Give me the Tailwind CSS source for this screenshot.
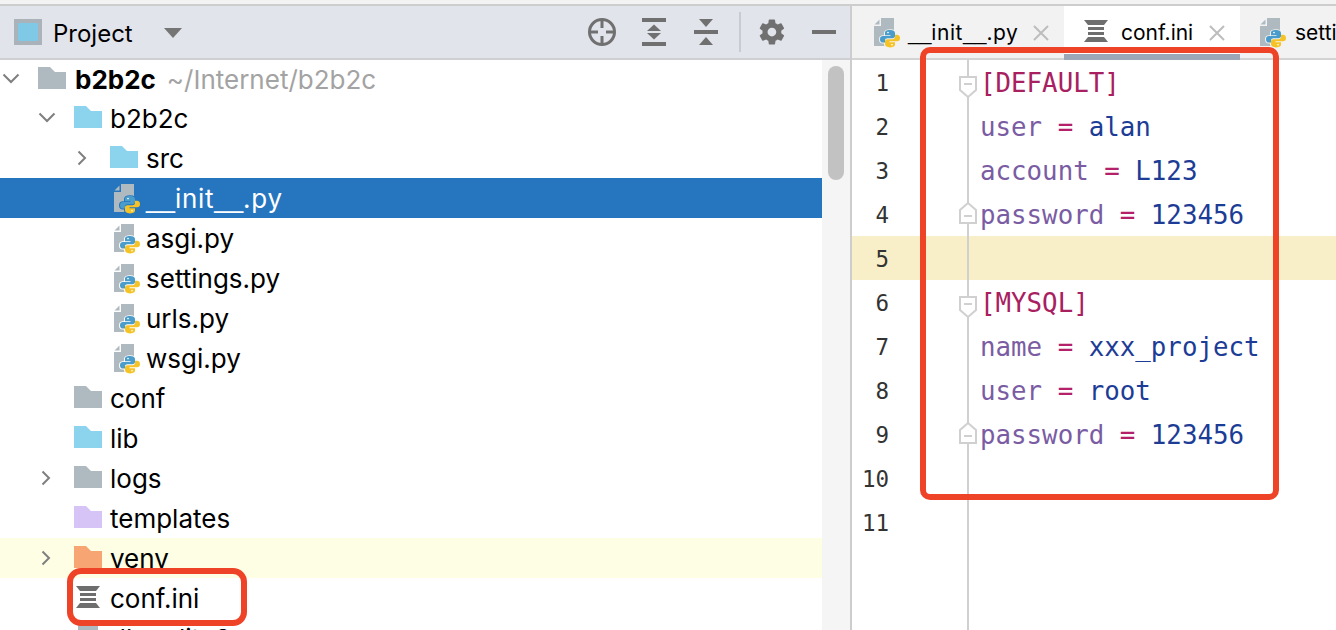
<!DOCTYPE html>
<html lang="en">

<head>
    <meta charset="UTF-8" />
    <meta name="viewport" content="width=device-width, initial-scale=1.0" />
    <title>conf.ini</title>
    <script src="https://cdn.jsdelivr.net/npm/@tailwindcss/browser@4"></script>
</head>

<body class="overflow-hidden bg-white">
    <!-- shared icons -->
    <svg class="hidden">
        <defs>
            <path id="snake" d="M10 0C6 0 5 1.500 5 3.500V6H10.500V7H3C1 7 0 8.500 0 10.500C0 13 1 14.500 3 14.500H5V12C5 10.500 6 9.500 7.500 9.500H12.500C14 9.500 15 8.500 15 7V3.500C15 1.500 13 0 10 0z" />
        </defs>
        <symbol id="folder" viewBox="0 0 28 22"><path d="M0 0H12L17 5H28V22H0z" fill="currentColor" /></symbol>
        <symbol id="open" viewBox="0 0 18 11"><path d="M1.500 1.500L9 9L16.500 1.500" fill="none" stroke="#7f7f7f" stroke-width="2" /></symbol>
        <symbol id="closed" viewBox="0 0 10 16"><path d="M1.500 1.500L8 8L1.500 14.500" fill="none" stroke="#7f7f7f" stroke-width="2" /></symbol>
        <symbol id="ini" viewBox="0 0 24 22" fill="#6e6e6e">
            <path d="M0 0H24L20 5H4z" /><rect x="4" y="7" width="16" height="3" /><rect x="4" y="12" width="16" height="3" /><path d="M4 17H20L24 22H0z" />
        </symbol>
        <symbol id="py" viewBox="0 0 26 30">
            <path d="M7 0H20V28H0V8H7z" fill="#aeb9c0" />
            <path d="M5.500 1.500V6.500H0.500z" fill="#aeb9c0" />
            <g transform="translate(6 12) scale(1 .87)">
                <g fill="currentColor" stroke="currentColor" stroke-width="2">
                    <use href="#snake" /><use href="#snake" transform="rotate(180 10 10)" />
                </g>
                <use href="#snake" fill="#4a9ccb" />
                <use href="#snake" fill="#f6c327" transform="rotate(180 10 10)" />
                <circle cx="8" cy="3" r=".9" fill="#fff" /><circle cx="12" cy="17" r=".9" fill="#fff" />
            </g>
        </symbol>
        <symbol id="fold-down" viewBox="0 0 18 22"><path d="M1 1H17V14L9 21L1 14z" fill="#fff" stroke="#d0d0d0" stroke-width="2" /><path d="M5 8H13" stroke="#d0d0d0" stroke-width="2" /></symbol>
        <symbol id="fold-up" viewBox="0 0 18 22"><path d="M1 21H17V8L9 1L1 8z" fill="#fff" stroke="#d0d0d0" stroke-width="2" /><path d="M5 14H13" stroke="#d0d0d0" stroke-width="2" /></symbol>
    </svg>

    <div class="relative w-[1336px] h-[630px] overflow-hidden flex flex-col font-['Inter',sans-serif] text-[24px] text-black">
        <!-- top strip -->
        <div class="h-[6px] shrink-0 bg-[#f3f3f3] border-b-2 border-[#cdcdcd]"></div>

        <div class="flex flex-1 min-h-0">
            <!-- Project pane -->
            <div class="w-[850px] shrink-0 flex flex-col">
                <div class="h-[54px] shrink-0 flex items-center bg-[#e1e4eb] border-b-2 border-[#cdcfd3] pl-[14px]">
                    <div class="w-[28px] h-[26px] border-[4px] border-[#aab2ba] bg-[#7fc8e6]"></div>
                    <span class="ml-[11px] pt-[3px] leading-none">Project</span>
                    <svg class="ml-[31px] mt-[2px]" width="18" height="10" viewBox="0 0 18 10"><path d="M0 0H18L9 10z" fill="#757575" /></svg>

                    <!-- toolbar -->
                    <div class="ml-auto flex items-center">
                        <svg width="28" height="28" viewBox="0 0 28 28" fill="none" stroke="#707070" stroke-width="3">
                            <circle cx="14" cy="14" r="12.500" /><path d="M14 2V10M14 18V26M2 14H10M18 14H26" />
                        </svg>
                        <svg class="ml-[26px]" width="24" height="28" viewBox="0 0 24 28" fill="#707070">
                            <rect width="24" height="4" /><rect y="24" width="24" height="4" /><path d="M12 6.500L19 13H5z" /><path d="M12 21.500L19 15H5z" />
                        </svg>
                        <svg class="ml-[28px]" width="24" height="26" viewBox="0 0 24 26" fill="#707070">
                            <rect y="11" width="24" height="4" /><path d="M5 0H19L12 8z" /><path d="M5 26H19L12 18z" />
                        </svg>
                        <div class="ml-[21px] w-[2px] h-[40px] bg-[#c9cbd0]"></div>
                        <svg class="ml-[16px]" width="30" height="30" viewBox="0 0 24 24" fill="#707070">
                            <path fill-rule="evenodd" d="M19.400 13c.04-.33.06-.66.06-1s-.02-.67-.06-1l2.100-1.650a.5.5 0 0 0 .12-.64l-2-3.460a.5.5 0 0 0-.6-.22l-2.500 1a7.300 7.300 0 0 0-1.730-1l-.38-2.650A.5.5 0 0 0 13.920 2h-4a.5.5 0 0 0-.5.420l-.38 2.650c-.62.25-1.200.6-1.730 1l-2.500-1a.5.5 0 0 0-.6.220l-2 3.460a.5.5 0 0 0 .12.64L4.440 11a7.900 7.900 0 0 0 0 2l-2.100 1.650a.5.5 0 0 0-.12.64l2 3.460c.12.22.38.3.6.22l2.500-1c.53.4 1.100.750 1.730 1l.38 2.650c.04.24.25.42.5.42h4c.25 0 .46-.18.5-.42l.38-2.650c.62-.25 1.200-.6 1.730-1l2.500 1c.22.08.48 0 .6-.22l2-3.460a.5.5 0 0 0-.12-.64zM11.920 15.500a3.500 3.500 0 1 1 0-7 3.500 3.500 0 0 1 0 7z" />
                        </svg>
                        <div class="ml-[25px] mr-[14px] w-[24px] h-[4px] bg-[#707070]"></div>
                    </div>
                </div>

                <div class="flex flex-1 min-h-0">
                    <!-- tree -->
                    <div class="flex-1 min-w-0 text-[26px]">
                        <div class="h-[38px] flex items-center pl-[2px]">
                            <svg class="w-[18px] h-[11px] mr-[18px] mb-[2px]"><use href="#open" /></svg>
                            <svg class="w-[28px] h-[22px] mr-[9px] mb-[2px] text-[#aeb9c0]"><use href="#folder" /></svg>
                            <span class="font-bold">b2b2c</span><span class="ml-[11px] text-[#a3a3a3]">~/Internet/b2b2c</span>
                        </div>
                        <div class="h-10 flex items-center pl-[38px]">
                            <svg class="w-[18px] h-[11px] mr-[18px] mb-[2px]"><use href="#open" /></svg>
                            <svg class="w-[28px] h-[22px] mr-[8px] mb-[2px] text-[#8cd4ee]"><use href="#folder" /></svg>
                            <span class="pt-[1px]">b2b2c</span>
                        </div>
                        <div class="h-10 flex items-center pl-[77px]">
                            <svg class="w-[10px] h-[16px] mr-[23px]"><use href="#closed" /></svg>
                            <svg class="w-[28px] h-[22px] mr-[8px] mb-[2px] text-[#8cd4ee]"><use href="#folder" /></svg>
                            <span class="pt-[1px]">src</span>
                        </div>
                        <div class="h-10 flex items-center pl-[114px] bg-[#2675bf] text-white">
                            <svg class="w-[26px] h-[30px] mr-[6px] mt-[2px] text-[#2675bf]"><use href="#py" /></svg>
                            <span class="pt-[1px]"><span class="font-['Liberation_Sans']">__</span><span class="tracking-[0.7px]">init</span><span class="font-['Liberation_Sans']">__</span><span class="tracking-[0.7px]">.py</span></span>
                        </div>
                        <div class="h-10 flex items-center pl-[114px]">
                            <svg class="w-[26px] h-[30px] mr-[6px] mt-[2px] text-white"><use href="#py" /></svg>
                            <span class="pt-[1px]">asgi.py</span>
                        </div>
                        <div class="h-10 flex items-center pl-[114px]">
                            <svg class="w-[26px] h-[30px] mr-[6px] mt-[2px] text-white"><use href="#py" /></svg>
                            <span class="pt-[1px]">settings.py</span>
                        </div>
                        <div class="h-10 flex items-center pl-[114px]">
                            <svg class="w-[26px] h-[30px] mr-[6px] mt-[2px] text-white"><use href="#py" /></svg>
                            <span class="pt-[1px]">urls.py</span>
                        </div>
                        <div class="h-10 flex items-center pl-[114px]">
                            <svg class="w-[26px] h-[30px] mr-[6px] mt-[2px] text-white"><use href="#py" /></svg>
                            <span class="pt-[1px]">wsgi.py</span>
                        </div>
                        <div class="h-10 flex items-center pl-[74px]">
                            <svg class="w-[28px] h-[22px] mr-[8px] mb-[2px] text-[#aeb9c0]"><use href="#folder" /></svg>
                            <span class="pt-[1px]">conf</span>
                        </div>
                        <div class="h-10 flex items-center pl-[74px]">
                            <svg class="w-[28px] h-[22px] mr-[8px] mb-[2px] text-[#8cd4ee]"><use href="#folder" /></svg>
                            <span class="pt-[1px]">lib</span>
                        </div>
                        <div class="h-10 flex items-center pl-[41px]">
                            <svg class="w-[10px] h-[16px] mr-[23px]"><use href="#closed" /></svg>
                            <svg class="w-[28px] h-[22px] mr-[8px] mb-[2px] text-[#aeb9c0]"><use href="#folder" /></svg>
                            <span class="pt-[1px]">logs</span>
                        </div>
                        <div class="h-10 flex items-center pl-[74px]">
                            <svg class="w-[28px] h-[22px] mr-[8px] mb-[2px] text-[#d6c4f7]"><use href="#folder" /></svg>
                            <span class="pt-[1px]">templates</span>
                        </div>
                        <div class="h-10 flex items-center pl-[41px] bg-[#fefee4]">
                            <svg class="w-[10px] h-[16px] mr-[23px]"><use href="#closed" /></svg>
                            <svg class="w-[28px] h-[22px] mr-[8px] mb-[2px] text-[#f7a673]"><use href="#folder" /></svg>
                            <span class="pt-[1px]">venv</span>
                        </div>
                        <div class="h-10 flex items-center pl-[76px]">
                            <svg class="w-[24px] h-[22px] mr-[10px] mb-[2px]"><use href="#ini" /></svg>
                            <span class="pt-[1px]">conf.ini</span>
                        </div>
                        <div class="h-10 flex items-center pl-[78px]">
                            <div class="w-[20px] h-[26px] mr-[12px] bg-[#aeb9c0]"></div>
                            <span class="pt-[1px]">db.sqlite3</span>
                        </div>
                    </div>
                    <!-- scrollbar -->
                    <div class="w-[28px] shrink-0 bg-[#f5f5f5] pt-[6px] pl-[6px]">
                        <div class="w-[16px] h-[114px] rounded-lg bg-[#c2c2c2]"></div>
                    </div>
                </div>
            </div>

            <!-- Editor pane -->
            <div class="flex-1 min-w-0 flex flex-col border-l-2 border-[#cdcdcd]">
                <!-- tabs -->
                <div class="h-[54px] shrink-0 flex bg-[#f2f2f2] border-b-2 border-[#d3d3d3] text-[21px]">
                    <div class="w-[212px] shrink-0 flex items-center pl-[22px] pt-[2px]">
                        <svg class="w-[26px] h-[30px] text-[#f2f2f2] mr-[8px]"><use href="#py" /></svg>
                        <span><span class="font-['Liberation_Sans']">__</span><span class="tracking-[0.55px]">init</span><span class="font-['Liberation_Sans']">__</span><span class="tracking-[0.55px]">.py</span></span>
                        <svg class="ml-[15px]" width="16" height="16" viewBox="0 0 16 16"><path d="M1 1L15 15M15 1L1 15" stroke="#bdbdbd" stroke-width="2" /></svg>
                    </div>
                    <div class="w-[176px] shrink-0 h-[54px] flex items-center pl-[20px] pt-[6px] bg-white border-b-[6px] border-[#9ca8b8]">
                        <svg class="w-[24px] h-[22px] mr-[13px] mb-[4px]"><use href="#ini" /></svg>
                        <span>conf.ini</span>
                        <svg class="ml-[16px]" width="16" height="16" viewBox="0 0 16 16"><path d="M1 1L15 15M15 1L1 15" stroke="#bdbdbd" stroke-width="2" /></svg>
                    </div>
                    <div class="shrink-0 flex items-center pl-[20px] pt-[2px]">
                        <svg class="w-[26px] h-[30px] text-[#f2f2f2] mr-[9px]"><use href="#py" /></svg>
                        <span>settings.py</span>
                    </div>
                </div>

                <!-- code lines -->
                <div class="flex-1 min-h-0 flex flex-col font-['DejaVu_Sans_Mono',monospace] text-[25.8px] leading-[46px] whitespace-pre">
                    <div class="relative h-11 flex">
                        <div class="w-[117px] shrink-0 pr-[78px] text-right text-[22.5px] text-[#333] border-r-2 border-[#d0d0d0]">1</div>
                        <svg class="absolute left-[107px] top-[16px] w-[18px] h-[22px]"><use href="#fold-down" /></svg>
                        <div class="pl-[11px] text-[#a8205f]">[DEFAULT]</div>
                    </div>
                    <div class="h-11 flex">
                        <div class="w-[117px] shrink-0 pr-[78px] text-right text-[22.5px] text-[#333] border-r-2 border-[#d0d0d0]">2</div>
                        <div class="pl-[11px] text-[#1c3c96]"><span class="text-[#7a5ca3]">user</span> <span class="text-[#b5206a]">=</span> alan</div>
                    </div>
                    <div class="h-11 flex">
                        <div class="w-[117px] shrink-0 pr-[78px] text-right text-[22.5px] text-[#333] border-r-2 border-[#d0d0d0]">3</div>
                        <div class="pl-[11px] text-[#1c3c96]"><span class="text-[#7a5ca3]">account</span> <span class="text-[#b5206a]">=</span> L123</div>
                    </div>
                    <div class="relative h-11 flex">
                        <div class="w-[117px] shrink-0 pr-[78px] text-right text-[22.5px] text-[#333] border-r-2 border-[#d0d0d0]">4</div>
                        <svg class="absolute left-[107px] top-[10px] w-[18px] h-[22px]"><use href="#fold-up" /></svg>
                        <div class="pl-[11px] text-[#1c3c96]"><span class="text-[#7a5ca3]">password</span> <span class="text-[#b5206a]">=</span> 123456</div>
                    </div>
                    <div class="h-11 flex bg-[#f8efc8]">
                        <div class="w-[117px] shrink-0 pr-[78px] text-right text-[22.5px] text-[#333] border-r-2 border-[#d0d0d0]">5</div>
                    </div>
                    <div class="relative h-11 flex">
                        <div class="w-[117px] shrink-0 pr-[78px] text-right text-[22.5px] text-[#333] border-r-2 border-[#d0d0d0]">6</div>
                        <svg class="absolute left-[107px] top-[16px] w-[18px] h-[22px]"><use href="#fold-down" /></svg>
                        <div class="pl-[11px] text-[#a8205f]">[MYSQL]</div>
                    </div>
                    <div class="h-11 flex">
                        <div class="w-[117px] shrink-0 pr-[78px] text-right text-[22.5px] text-[#333] border-r-2 border-[#d0d0d0]">7</div>
                        <div class="pl-[11px] text-[#1c3c96]"><span class="text-[#7a5ca3]">name</span> <span class="text-[#b5206a]">=</span> xxx_project</div>
                    </div>
                    <div class="h-11 flex">
                        <div class="w-[117px] shrink-0 pr-[78px] text-right text-[22.5px] text-[#333] border-r-2 border-[#d0d0d0]">8</div>
                        <div class="pl-[11px] text-[#1c3c96]"><span class="text-[#7a5ca3]">user</span> <span class="text-[#b5206a]">=</span> root</div>
                    </div>
                    <div class="relative h-11 flex">
                        <div class="w-[117px] shrink-0 pr-[78px] text-right text-[22.5px] text-[#333] border-r-2 border-[#d0d0d0]">9</div>
                        <svg class="absolute left-[107px] top-[10px] w-[18px] h-[22px]"><use href="#fold-up" /></svg>
                        <div class="pl-[11px] text-[#1c3c96]"><span class="text-[#7a5ca3]">password</span> <span class="text-[#b5206a]">=</span> 123456</div>
                    </div>
                    <div class="h-11 flex">
                        <div class="w-[117px] shrink-0 pr-[78px] text-right text-[22.5px] text-[#333] border-r-2 border-[#d0d0d0]">10</div>
                    </div>
                    <div class="h-11 flex">
                        <div class="w-[117px] shrink-0 pr-[78px] text-right text-[22.5px] text-[#333] border-r-2 border-[#d0d0d0]">11</div>
                    </div>
                    <div class="flex-1 flex">
                        <div class="w-[117px] shrink-0 border-r-2 border-[#d0d0d0]"></div>
                    </div>
                </div>
            </div>
        </div>

        <!-- red annotation boxes -->
        <div class="absolute left-[920px] top-[47px] w-[359px] h-[453px] rounded-[10px] border-[6px] border-[#ee4327]"></div>
        <div class="absolute left-[67px] top-[568px] w-[180px] h-[58px] rounded-[14px] border-[6px] border-[#ee4327]"></div>
    </div>
</body>

</html>
